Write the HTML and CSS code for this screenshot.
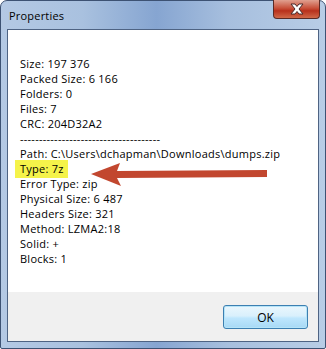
FILE: index.html
```html
<!DOCTYPE html>
<html lang="en">
<head>
    <meta charset="UTF-8">
    <title>Properties</title>
    <link rel="stylesheet" href="styles.css">
</head>
<body>
    <div class="window">
        <div class="titlebar">
            <div class="title">Properties</div>
            <div class="close">
                <svg width="18" height="12" viewBox="0 0 18 12">
                    <path d="M3 1 L7 1 L9 3.5 L11 1 L15 1 L11 6 L15 11 L11 11 L9 8.5 L7 11 L3 11 L7 6 Z" fill="#fff" stroke="#4a2a2a" stroke-width="1" stroke-linejoin="round"/>
                </svg>
            </div>
        </div>

        <div class="client">
            <div class="content">
                <div class="line">Size: 197 376</div>
                <div class="line">Packed Size: 6 166</div>
                <div class="line">Folders: 0</div>
                <div class="line">Files: 7</div>
                <div class="line">CRC: 204D32A2</div>
                <div class="line">-------------------------------------</div>
                <div class="line">Path: C:\Users\dchapman\Downloads\dumps.zip</div>
                <div class="line"><span class="mark">Type: 7z</span></div>
                <div class="line">Error Type: zip</div>
                <div class="line">Physical Size: 6 487</div>
                <div class="line">Headers Size: 321</div>
                <div class="line">Method: LZMA2:18</div>
                <div class="line">Solid: +</div>
                <div class="line">Blocks: 1</div>

                <svg class="arrow" width="180" height="30" viewBox="0 0 180 30">
                    <path d="M2 13 L31 2 L28 10 L178 9 L178 16 L28 17 L32 25 Z" fill="#c2472f"/>
                </svg>
            </div>
            <div class="footer">
                <button>OK</button>
            </div>
        </div>
    </div>
</body>
</html>
```

FILE: styles.css
```css
* {
    margin: 0;
    padding: 0;
    box-sizing: border-box;
}

body {
    background: #fff;
    font-family: 'Open Sans', 'Noto Sans', sans-serif;
}

.window {
    width: 326px;
    height: 349px;
    border: 1px solid #3d5273;
    border-radius: 7px 7px 2px 2px;
    background: linear-gradient(90deg, #b4c9e4 0%, #a9c1df 25%, #86a5d1 48%, #a7bfde 70%, #b8cde6 100%);
    padding: 0 6px 6px;
    display: flex;
    flex-direction: column;
}

.titlebar {
    height: 28px;
    display: flex;
    justify-content: space-between;
    align-items: flex-start;
}

.title {
    margin-top: 7px;
    margin-left: 2px;
    font-size: 11px;
    letter-spacing: 0.2px;
    color: #000;
}

.close {
    width: 47px;
    height: 19px;
    margin-top: -1px;
    margin-right: -1px;
    border: 1px solid #5a2a26;
    border-top: none;
    border-radius: 0 0 4px 4px;
    background: linear-gradient(180deg, #e0a090 0%, #c8513b 45%, #b8301c 60%, #d06848 100%);
    display: flex;
    justify-content: center;
    align-items: center;
}

.client {
    flex: 1;
    border: 1px solid #4e6383;
    display: flex;
    flex-direction: column;
}

.content {
    position: relative;
    height: 262px;
    background: #fff;
    padding: 26px 0 0 12px;
    font-size: 11px;
    letter-spacing: 0.25px;
    color: #000;
}

.line {
    height: 15px;
    line-height: 15px;
    white-space: nowrap;
}

.mark {
    background: #f5f34a;
    padding: 1px 4px 2px 5px;
    margin-left: -5px;
}

.arrow {
    position: absolute;
    left: 81px;
    top: 131px;
}

.footer {
    flex: 1;
    background: #f0f0f0;
    display: flex;
    justify-content: flex-end;
    align-items: flex-start;
    padding: 13px 10px 0 0;
}

button {
    width: 85px;
    height: 24px;
    border: 1px solid #3c7fb1;
    border-radius: 3px;
    background: linear-gradient(180deg, #eaf6fd 0%, #d9f0fc 45%, #bee6fd 55%, #a7d9f5 100%);
    box-shadow: inset 0 0 0 1px #b5e4f8;
    font-family: 'Open Sans', 'Noto Sans', sans-serif;
    font-size: 12px;
    color: #000;
}
```
